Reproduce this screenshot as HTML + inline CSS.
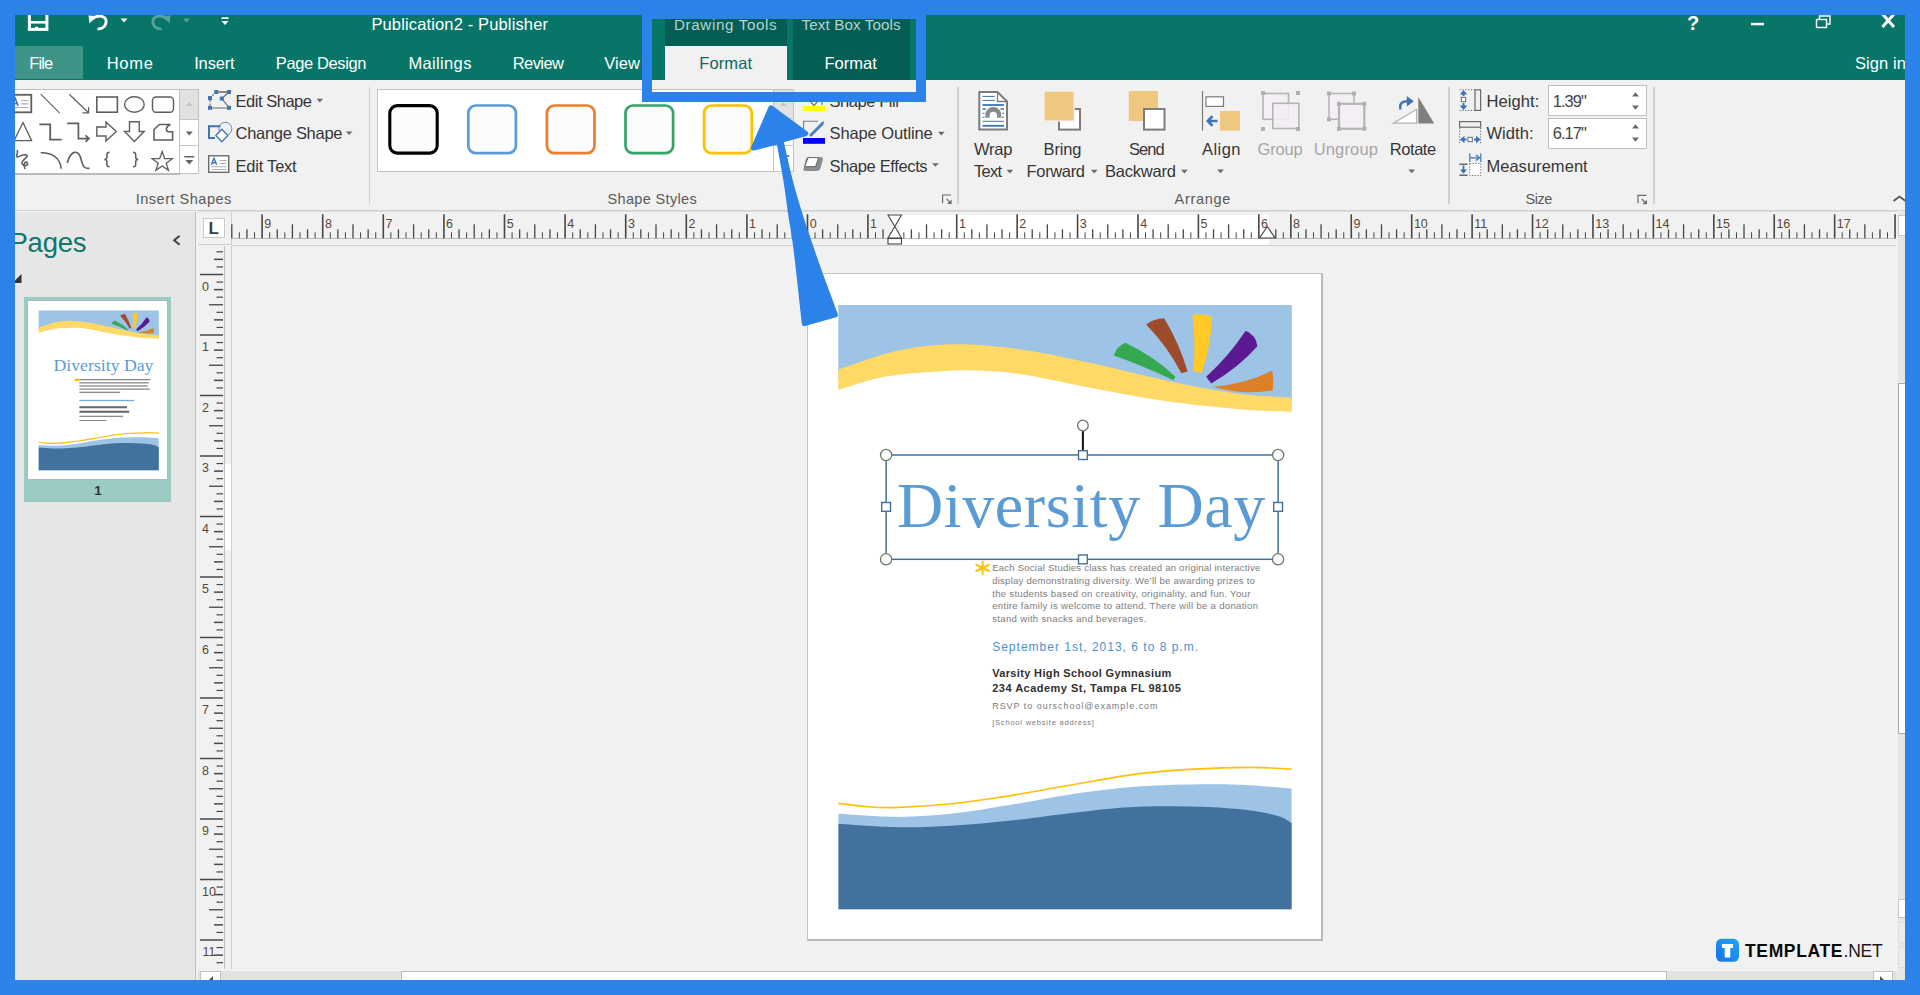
<!DOCTYPE html>
<html lang="en"><head><meta charset="utf-8"><title>Publisher - Format tab</title>
<style>
html,body{margin:0;padding:0;}
body{width:1920px;height:995px;overflow:hidden;background:#2b82e9;position:relative;font-family:'Liberation Sans',sans-serif;}
#win{position:absolute;left:0;top:0;width:1920px;height:995px;clip-path:inset(15px 15px 15px 15px);background:#f1f1f1;overflow:hidden;}
.a{position:absolute;}
.t{position:absolute;white-space:pre;}
svg{position:absolute;left:0;top:0;overflow:visible;}
</style></head><body>
<div id="win">
<!-- title + tab strip -->
<div class="a" style="left:0;top:0;width:1920px;height:80px;background:#077568"></div>
<div class="a" style="left:15px;top:46px;width:68px;height:33px;background:#3f9488"></div>
<div class="a" style="left:665px;top:0;width:122px;height:46px;background:#055e53"></div>
<div class="a" style="left:665px;top:46px;width:122px;height:34px;background:#f1f1f1"></div>
<div class="a" style="left:793px;top:0;width:117px;height:80px;background:#055e53"></div>
<!-- ribbon -->
<div class="a" style="left:0;top:80px;width:1920px;height:130px;background:#f1f1f1;border-bottom:1.5px solid #d2d2d2"></div>
<!-- shapes gallery -->
<div class="a" style="left:0;top:88.6px;width:179.5px;height:86.9px;background:#fff;border:1.5px solid #c2c2c2;border-bottom:2.5px solid #b7bcc2;box-sizing:border-box"></div>
<div class="a" style="left:179.5px;top:88.6px;width:19.5px;height:85.9px;background:#fff;border:1.5px solid #c2c2c2;border-left:none;box-sizing:border-box"></div>
<div class="a" style="left:180px;top:90.1px;width:17.5px;height:28.9px;background:#e1e1e1;border-bottom:1px solid #c6c6c6"></div>
<div class="a" style="left:180px;top:145px;width:17.5px;height:1px;background:#c6c6c6"></div>
<!-- styles gallery -->
<div class="a" style="left:377px;top:88.6px;width:397px;height:83.9px;background:#fff;border:1.5px solid #c2c2c2;box-sizing:border-box"></div>
<div class="a" style="left:774px;top:88.6px;width:20px;height:83.9px;background:#fff;border:1.5px solid #c2c2c2;border-left:none;box-sizing:border-box"></div>
<div class="a" style="left:774px;top:90.1px;width:18.5px;height:27.9px;background:#e1e1e1;border-bottom:1px solid #c6c6c6"></div>
<div class="a" style="left:774px;top:145px;width:18.5px;height:1px;background:#c6c6c6"></div>
<!-- group separators -->
<div class="a" style="left:368.5px;top:86.5px;width:1.5px;height:117px;background:#d0d0d0"></div>
<div class="a" style="left:957px;top:86.5px;width:1.5px;height:117px;background:#d0d0d0"></div>
<div class="a" style="left:1448px;top:86.5px;width:1.5px;height:117px;background:#d0d0d0"></div>
<div class="a" style="left:1653px;top:86.5px;width:1.5px;height:117px;background:#d0d0d0"></div>
<!-- size inputs -->
<div class="a" style="left:1548px;top:85px;width:98.5px;height:30.5px;background:#fff;border:1.5px solid #c0c0c0;box-sizing:border-box"></div>
<div class="a" style="left:1548px;top:118px;width:98.5px;height:30.5px;background:#fff;border:1.5px solid #c0c0c0;box-sizing:border-box"></div>
<svg width="1920" height="995" viewBox="0 0 1920 995">
<!-- quick access -->
<g fill="none" stroke="#fff" stroke-width="2.6">
 <rect x="29.4" y="8" width="17.5" height="21.4" stroke-width="3"/>
 <path d="M29 22.3H47"/>
 <path d="M36.6 26.8V30" stroke-width="3.2"/>
 <path d="M91.5 19.5 C98 13.5 107 16 106 22.5 C105.5 27 100.5 29.5 97.5 28.8" stroke-width="2.8"/>
</g>
<path d="M88.5 15.5 L96.5 16 L89.5 23.5Z" fill="#fff"/>
<g opacity=".33"><path d="M167.5 19.5 C161 13.5 152 16 153 22.5 C153.5 27 158.5 29.5 161.5 28.8" fill="none" stroke="#fff" stroke-width="2.8"/><path d="M170.5 15.5 L162.5 16 L169.5 23.5Z" fill="#fff"/><path d="M183 18.5h7l-3.5 4z" fill="#fff"/></g>
<path d="M120.5 18.5h7l-3.5 4z" fill="#fff"/>
<path d="M221.5 17.2h7v1.8h-7z M221.5 21h7l-3.5 4z" fill="#fff"/>
<!-- window controls -->
<path d="M1751 22.8h13v2.5h-13z" fill="#fff"/>
<g fill="none" stroke="#fff" stroke-width="1.4"><rect x="1816.5" y="19.5" width="10" height="8"/><path d="M1819.5 19.5V16h10.5v8h-3.5"/></g>
<path d="M1882.5 14 L1894 27 M1894 14 L1882.5 27" stroke="#fff" stroke-width="3" fill="none"/>
<!-- collapse ribbon chevron -->
<path d="M1893.5 201 L1899.5 196.5 L1905.5 201" stroke="#555" stroke-width="1.8" fill="none"/>
<text x="1693" y="30" text-anchor="middle" font-family="'Liberation Sans',sans-serif" font-weight="700" font-size="20" fill="#fff">?</text>
<!-- shapes gallery icons -->
<g fill="none" stroke="#5e5e5e" stroke-width="1.4">
 <rect x="10" y="94.8" width="21.3" height="17.5" stroke-width="1.8"/>
 <path d="M21 100.5h7.5M21 103.8h7.5M14 107.5h14.5" stroke="#b0b0b0" stroke-width="1.2"/>
 <path d="M40.7 94.2 L59.7 113.2" stroke-width="1.1"/>
 <path d="M69.2 94.2 L88.5 112.8 M82.5 112.9 H88.6 V107" stroke-width="1.2"/>
 <rect x="96.8" y="97" width="20.6" height="15.2" stroke-width="1.6"/>
 <ellipse cx="134.4" cy="104.5" rx="9.8" ry="7.7"/>
 <rect x="152.5" y="97" width="21" height="15.2" rx="3.5"/>
 <path d="M23 122.5 L31.6 140.7 H14 Z" stroke-width="1.3"/>
 <path d="M39.3 124.3 H50.2 V139.6 H61.7" stroke-width="1.8"/>
 <path d="M67.2 123.3 H78.4 V138.6 H88.5 M85.5 135.4 L89 138.6 L85.5 141.8" stroke-width="1.7"/>
 <path d="M96.8 127 H106 V122 L116.3 131.5 L106 141 V136 H96.8 Z"/>
 <path d="M129.5 121.8 H139.2 V131.5 H144.2 L134.4 141.5 L124.6 131.5 H129.5 Z"/>
 <path d="M154 140 V129.5 L159.5 124.5 H170.5 C165.5 126.5 165.5 130.5 168 131.8 H172.6 V140 Z" stroke-width="1.6"/>
 <path d="M17 150 C19 153 15 156 17.5 157 C21 156 25 153 27 155.5 C28 158 21 160 22 163.5 C23.5 167 28.5 166 27.5 163 C26.5 161 22.5 162 25 169" stroke-width="1.6"/>
 <path d="M40.7 152.8 C52 152.5 60.5 158 61.2 168.8" stroke-width="1.5"/>
 <path d="M67.2 163 C71 149.5 78.5 149.5 81 159 C83 167.5 85 168.6 89.5 168.4" stroke-width="1.6"/>
 <path d="M109.6 152.3 Q106.9 152.3 106.9 154.6 V157.3 Q106.9 159.5 104.3 159.5 Q106.9 159.5 106.9 161.7 V164.4 Q106.9 166.7 109.6 166.7" stroke-width="1.5"/>
 <path d="M133 152.3 Q135.7 152.3 135.7 154.6 V157.3 Q135.7 159.5 138.3 159.5 Q135.7 159.5 135.7 161.7 V164.4 Q135.7 166.7 133 166.7" stroke-width="1.5"/>
 <path d="M162.2 151.5 L164.7 158.6 L172.3 158.7 L166.2 163.2 L168.5 170.4 L162.2 166 L155.9 170.4 L158.2 163.2 L152.1 158.7 L159.7 158.6 Z" stroke-width="1.3"/>
</g>
<path d="M12.5 106 L15.3 98.5 L18.1 106 M13.5 103.6 H17.1" stroke="#3e74b5" stroke-width="1.5" fill="none"/>
<path d="M185.8 106 h7 l-3.5 -4z" fill="#c4c4c4"/>
<path d="M185.8 131.5 h7 l-3.5 4z" fill="#666"/>
<path d="M184.3 156 h10 v1.6 h-10z M185.3 160 h8 l-4 4.5z" fill="#666"/>
<path d="M780 106 h7 l-3.5 -4z" fill="#c4c4c4"/>
<path d="M780 131.5 h7 l-3.5 4z" fill="#666"/>
<path d="M779.5 155.2 h10 v1.6 h-10z M780.5 159.2 h8 l-4 4.5z" fill="#666"/>
<!-- shape styles -->
<g fill="#fdfcfd" stroke-width="3">
 <rect x="389.8" y="105.6" width="47.4" height="47.5" rx="7.5" stroke="#000" stroke-width="3.1"/>
 <rect x="468.3" y="105.5" width="47.6" height="47.7" rx="7.5" stroke="#5b9bd5" stroke-width="2.7"/>
 <rect x="546.9" y="105.5" width="47.6" height="47.7" rx="7.5" stroke="#ed7d31" stroke-width="2.7"/>
 <rect x="625.5" y="105.5" width="47.6" height="47.7" rx="7.5" stroke="#34a468" stroke-width="2.7"/>
 <rect x="704.1" y="105.5" width="47.6" height="47.7" rx="7.5" stroke="#ffc000" stroke-width="2.7"/>
</g>
<!-- Edit Shape icon -->
<g stroke="#6a6a6a" fill="none" stroke-width="1.2">
 <path d="M216.3 92 L210 98 M210 100 V106" stroke-dasharray="2 1.5"/>
 <path d="M218.3 92 H227" stroke-width="2" stroke="#8a8a8a"/>
 <path d="M229 92 L221.8 98.5 L229 107.5"/>
 <path d="M212 108 H227" stroke-width="1"/>
</g>
<g fill="#3e74b5"><rect x="214.3" y="90" width="4" height="4"/><rect x="227" y="90" width="4" height="4"/><rect x="208" y="96" width="4" height="4"/><rect x="219.8" y="96.6" width="4" height="4"/><rect x="208" y="105.8" width="4" height="4"/><rect x="227" y="105.8" width="4" height="4"/></g>
<!-- Change Shape icon -->
<circle cx="225.3" cy="128.8" r="6.5" fill="none" stroke="#5b8fd0" stroke-width="1"/>
<path d="M220.5 126.3 H209 V138 H215" fill="none" stroke="#3e74b5" stroke-width="2"/>
<path d="M221.8 129.3 L227.8 135.5 L221.8 141.7 L215.8 135.5 Z" fill="#fff" stroke="#3e74b5" stroke-width="1.3"/>
<!-- Edit Text icon -->
<rect x="208.7" y="155.8" width="20" height="16.5" fill="#fff" stroke="#6a6a6a" stroke-width="1.4"/>
<path d="M219.5 160.5h7M219.5 163.5h7M211.5 166.8h15M211.5 169.5h15" stroke="#b0b0b0" stroke-width="1.1" fill="none"/>
<path d="M211.3 164.8 L214 158.3 L216.7 164.8 M212.3 162.7 H215.7" stroke="#3e74b5" stroke-width="1.4" fill="none"/>
<!-- dropdown arrows -->
<g fill="#6a6a6a">
<path d="M316.5 98.8h6.6l-3.3 3.6z"/><path d="M345.9 131.5h6.6l-3.3 3.6z"/>
<path d="M938 131.8h6.6l-3.3 3.6z"/><path d="M932.1 163.2h6.6l-3.3 3.6z"/>
<path d="M1006.6 169.8h6.6l-3.3 3.6z"/><path d="M1090.9 169.8h6.6l-3.3 3.6z"/><path d="M1181.1 169.8h6.6l-3.3 3.6z"/>
<path d="M1217.2 169.6h6.6l-3.3 3.6z"/><path d="M1408.4 169.6h6.6l-3.3 3.6z"/>
<path d="M1632 96.5h7l-3.5-4.2z"/><path d="M1632 105.6h7l-3.5 4.2z"/>
<path d="M1632 128.5h7l-3.5-4.2z"/><path d="M1632 137.6h7l-3.5 4.2z"/>
</g>
<!-- Shape Fill / Outline / Effects -->
<path d="M808.5 99 L814 105.6 L819.5 99" fill="#fff" stroke="#6a6a6a" stroke-width="1.2"/><path d="M822 101.5 q1.6 2.6 0 3.6 q-1.6 -1 0 -3.6z" fill="#4a7fc0"/>
<rect x="803" y="106" width="22" height="5" fill="#ffff00"/>
<path d="M818 121.3 H803.6 V137" fill="none" stroke="#7a7a7a" stroke-width="1.1"/>
<path d="M811 135 L822 124" stroke="#4a7fc0" stroke-width="3" stroke-linecap="round" fill="none"/>
<path d="M809.8 136.6 l1 -3 l2 2z M821 122.5 l3 -1.5 l-0.6 3.2z" fill="#4a7fc0"/>
<rect x="803" y="138" width="22" height="5.8" fill="#0000ff"/>
<path d="M808 157 H820.5 Q823.5 157 822.8 160 L820.5 168 Q819.7 171 816.5 171 H805.5 Q802.8 171 803.6 168.5 L805.8 159.5 Q806.3 157 808 157Z" fill="#8c8c8c"/>
<path d="M808.2 157.6 H818.5 L815.6 166.6 H804.6 Z" fill="#fff" stroke="#6a6a6a" stroke-width="1"/>
<!-- dialog launchers -->
<g fill="none" stroke="#6a6a6a" stroke-width="1.2"><path d="M951 195 H942.6 V203"/><path d="M946.5 198.8 L950.5 202.8"/><path d="M1646.3 195.3 H1638 V203.3"/><path d="M1641.8 199 L1645.8 203"/></g>
<path d="M951.6 199.5 V204 H947z M1647 199.8 V204.3 H1642.4z" fill="#6a6a6a"/>
<!-- Wrap Text -->
<path d="M979.3 92 H997.5 L1007 101.5 V129.6 H979.3 Z" fill="#fff" stroke="#7c7c7c" stroke-width="2"/>
<path d="M997.5 92 V101.5 H1007" fill="none" stroke="#7c7c7c" stroke-width="1.3"/>
<g stroke="#3a74b8" fill="none"><path d="M982.5 96.4 H994.8 M982.5 100.4 H994.8" stroke-width="1"/><path d="M982.5 105 H1004" stroke-width="1.8"/><path d="M982.5 109 H986 M1000.5 109 H1004" stroke-width="1.6"/><path d="M982.5 113.3 H984.5 M1002 113.3 H1004 M982.5 117.3 H984.5 M1002 117.3 H1004" stroke-width="1"/><path d="M982.5 121.3 H1004" stroke-width="1"/><path d="M982.5 125.8 H1004" stroke-width="1.8"/></g>
<path d="M985.3 117.8 V115 A8 8 0 0 1 1001.3 115 V117.8 H997 V115.5 A3.7 3.7 0 0 0 989.6 115.5 V117.8 Z" fill="#8a8a8a"/>
<!-- Bring Forward -->
<rect x="1059" y="109" width="21" height="20.6" fill="#fff" stroke="#7c7c7c" stroke-width="2"/>
<rect x="1044" y="91" width="30.2" height="30" fill="#edc87e" stroke="#f3f3f6" stroke-width="1.2"/>
<!-- Send Backward -->
<rect x="1128.8" y="91" width="29.2" height="30" fill="#edc87e"/>
<rect x="1144" y="109" width="20.5" height="20.6" fill="#fff" stroke="#7c7c7c" stroke-width="2"/>
<!-- Align -->
<path d="M1202.5 91 V130.6" stroke="#7c7c7c" stroke-width="1.2"/>
<rect x="1206" y="96.8" width="17.5" height="9.6" fill="#fff" stroke="#7c7c7c" stroke-width="1.2"/>
<rect x="1220" y="111" width="20" height="19.6" fill="#edc87e"/>
<path d="M1217.5 121 H1208.5 M1212.5 116.2 L1207.8 121 L1212.5 125.8" fill="none" stroke="#3a74b8" stroke-width="2.6"/>
<!-- Group -->
<g fill="#f4eff4" stroke="#b4b4b4" stroke-width="1.6"><rect x="1263" y="93.5" width="25.5" height="25.8"/><rect x="1272.8" y="103.3" width="26" height="25.2" fill="#f4eff4" fill-opacity=".85"/></g>
<g fill="#b0b0b0"><rect x="1261" y="91" width="4" height="4"/><rect x="1296" y="91" width="4" height="4"/><rect x="1261" y="127" width="4" height="4"/><rect x="1296" y="127" width="4" height="4"/></g>
<!-- Ungroup -->
<g fill="#f4eff4" stroke="#b4b4b4"><rect x="1329" y="93.5" width="25" height="25.8" stroke-width="1.5"/><rect x="1339" y="103.8" width="25.3" height="25" stroke-width="2.2"/></g>
<g fill="#b0b0b0"><rect x="1327" y="91.5" width="4" height="4"/><rect x="1352" y="91.5" width="4" height="4"/><rect x="1327" y="117.3" width="4" height="4"/><rect x="1337" y="101.8" width="4" height="4"/><rect x="1362.3" y="101.8" width="4" height="4"/><rect x="1337" y="126.8" width="4" height="4"/><rect x="1362.3" y="126.8" width="4" height="4"/></g>
<!-- Rotate -->
<path d="M1393.5 123.2 H1416.6 V109.3 Z" fill="#fff" stroke="#b4b4b4" stroke-width="1.3"/>
<path d="M1418.3 97 V123.6 H1434.2 Z" fill="#7f7f7f"/>
<path d="M1400.5 109.5 C1399 103.5 1402.5 100.8 1408.5 101.3" fill="none" stroke="#3a74b8" stroke-width="2.4"/>
<path d="M1406.8 96 L1413.8 101.3 L1406.8 106.6 Z" fill="#3a74b8"/>
<!-- Height icon -->
<g fill="none" stroke="#6a6a6a" stroke-width="1"><path d="M1459.5 89.7 H1475 M1459.5 110.5 H1475" stroke-dasharray="1.2 1.6"/><rect x="1475" y="89.8" width="5.6" height="20.6" stroke-width="1.2"/><rect x="1461.3" y="97.3" width="4.4" height="4.4" fill="#fff"/></g>
<path d="M1463.5 96 V92 M1463.5 103 V107" stroke="#3a74b8" stroke-width="1.8" fill="none"/>
<path d="M1459.7 94.5 L1463.5 90 L1467.3 94.5 Z M1459.7 105.5 L1463.5 110 L1467.3 105.5 Z" fill="#3a74b8"/>
<!-- Width icon -->
<g fill="none" stroke="#6a6a6a" stroke-width="1"><rect x="1459.6" y="121.6" width="21" height="5.6" stroke-width="1.2"/><path d="M1459.6 128 V143.5 M1480.6 128 V143.5" stroke-dasharray="1.2 1.6"/><rect x="1467.9" y="137.3" width="4.4" height="4.4" fill="#fff"/></g>
<path d="M1466.5 139.5 H1462.5 M1474 139.5 H1478" stroke="#3a74b8" stroke-width="1.8" fill="none"/>
<path d="M1464.5 135.7 L1460 139.5 L1464.5 143.3 Z M1476 135.7 L1480.5 139.5 L1476 143.3 Z" fill="#3a74b8"/>
<!-- Measurement icon -->
<rect x="1469.8" y="163.5" width="11" height="12" fill="#fff" stroke="#6a6a6a" stroke-width="1" stroke-dasharray="1.2 1.6"/>
<path d="M1469.8 153.5 V162 M1480.8 153.5 V162 M1470.5 157.8 H1478" stroke="#3a74b8" stroke-width="1.2" fill="none"/>
<path d="M1476 155 L1479.5 157.8 L1476 160.6" stroke="#3a74b8" stroke-width="1.3" fill="none"/>
<path d="M1459.3 164.3 H1467.5 M1459.3 175.3 H1467.5" stroke="#6a6a6a" stroke-width="1.4"/>
<path d="M1463.5 165.5 V171" stroke="#3a74b8" stroke-width="1.8"/>
<path d="M1460 169.5 L1463.5 173.8 L1467 169.5 Z" fill="#3a74b8"/>

</svg>

<!-- pages panel -->
<div class="a" style="left:0;top:211.5px;width:195.2px;height:790px;background:#e6e6e6;border-right:1.7px solid #bebebe"></div>
<div class="a" style="left:23.8px;top:297px;width:147.2px;height:204.5px;background:#9bccc4"></div>
<div class="a" style="left:27.4px;top:300.4px;width:140.4px;height:179.4px;background:#fff;border:1px solid #b4b4c0;box-sizing:border-box"></div>
<!-- workspace -->
<!-- rulers -->
<div class="a" style="left:197.5px;top:211px;width:1699px;height:1px;background:#dcdcdc"></div>
<div class="a" style="left:232px;top:245px;width:1664px;height:1.3px;background:#cfcfcf"></div>
<div class="a" style="left:232px;top:238px;width:1664px;height:1.2px;background:#bdbdbd"></div>
<div class="a" style="left:900px;top:214.5px;width:368.6px;height:23.5px;background:#fff"></div>
<div class="a" style="left:900px;top:239px;width:368.6px;height:6px;background:#fff"></div>
<!-- corner box -->
<div class="a" style="left:197.5px;top:212px;width:34px;height:33px;border-right:1.2px solid #cfcfcf;border-bottom:1.3px solid #cfcfcf;box-sizing:border-box"></div>
<div class="a" style="left:202.5px;top:217.5px;width:22.5px;height:20.5px;background:#fff;border:1.5px solid #c9c9c9;box-sizing:border-box"></div>
<!-- vertical ruler -->
<div class="a" style="left:223.6px;top:246px;width:1.8px;height:723px;background:#c2c2c2"></div>
<div class="a" style="left:231px;top:246px;width:1.2px;height:723px;background:#cfcfcf"></div>
<div class="a" style="left:225.4px;top:464px;width:5.6px;height:86px;background:#fff"></div>
<!-- right scrollbar strip -->
<div class="a" style="left:1898px;top:211.5px;width:8px;height:770px;background:#e6e6e6"></div>
<div class="a" style="left:1897.5px;top:214.5px;width:9px;height:21px;background:#fff;border:1px solid #c4c4c4;box-sizing:border-box"></div>
<div class="a" style="left:1898px;top:383px;width:9px;height:350.5px;background:#fff;border:1.2px solid #a9a9a9;box-sizing:border-box"></div>
<div class="a" style="left:1897.5px;top:898.5px;width:9px;height:19.5px;background:#fff;border:1px solid #c4c4c4;box-sizing:border-box"></div>
<div class="a" style="left:1898px;top:922px;width:9px;height:21px;background:#ececec;border:1px solid #dcdcdc;box-sizing:border-box"></div>
<div class="a" style="left:1898px;top:947px;width:9px;height:21px;background:#ececec;border:1px solid #dcdcdc;box-sizing:border-box"></div>
<!-- bottom scrollbar -->
<div class="a" style="left:197.5px;top:970.5px;width:1699.5px;height:12px;background:#e2e2e2"></div>
<div class="a" style="left:200px;top:971px;width:20.5px;height:12px;background:#fff;border:1.3px solid #c2c2c2;box-sizing:border-box"></div>
<div class="a" style="left:401px;top:971px;width:1265.5px;height:12px;background:#fff;border:1.3px solid #bcbcbc;box-sizing:border-box"></div>
<div class="a" style="left:1872.5px;top:971px;width:20px;height:12px;background:#fff;border:1.3px solid #c2c2c2;box-sizing:border-box"></div>
<!-- page -->
<div class="a" style="left:807px;top:272.8px;width:516px;height:668.5px;background:#fff;border:1.3px solid #c3c3c3;border-right:2px solid #b9b9b9;border-bottom:2px solid #b9b9b9;box-sizing:border-box"></div>
<svg width="1920" height="995" viewBox="0 0 1920 995">
<g fill="#474747"><rect x='231.15' y='224.3' width='1.3' height='14'/><rect x='238.88' y='232.3' width='1' height='6'/><rect x='246.30' y='229.3' width='1.3' height='9'/><rect x='254.02' y='232.3' width='1' height='6'/><rect x='261.30' y='214.3' width='1.6' height='24'/><rect x='269.17' y='232.3' width='1' height='6'/><rect x='276.60' y='229.3' width='1.3' height='9'/><rect x='284.32' y='232.3' width='1' height='6'/><rect x='291.75' y='224.3' width='1.3' height='14'/><rect x='299.47' y='232.3' width='1' height='6'/><rect x='306.90' y='229.3' width='1.3' height='9'/><rect x='314.62' y='232.3' width='1' height='6'/><rect x='321.90' y='214.3' width='1.6' height='24'/><rect x='329.77' y='232.3' width='1' height='6'/><rect x='337.20' y='229.3' width='1.3' height='9'/><rect x='344.93' y='232.3' width='1' height='6'/><rect x='352.35' y='224.3' width='1.3' height='14'/><rect x='360.07' y='232.3' width='1' height='6'/><rect x='367.50' y='229.3' width='1.3' height='9'/><rect x='375.22' y='232.3' width='1' height='6'/><rect x='382.50' y='214.3' width='1.6' height='24'/><rect x='390.38' y='232.3' width='1' height='6'/><rect x='397.80' y='229.3' width='1.3' height='9'/><rect x='405.52' y='232.3' width='1' height='6'/><rect x='412.95' y='224.3' width='1.3' height='14'/><rect x='420.68' y='232.3' width='1' height='6'/><rect x='428.10' y='229.3' width='1.3' height='9'/><rect x='435.82' y='232.3' width='1' height='6'/><rect x='443.10' y='214.3' width='1.6' height='24'/><rect x='450.97' y='232.3' width='1' height='6'/><rect x='458.40' y='229.3' width='1.3' height='9'/><rect x='466.12' y='232.3' width='1' height='6'/><rect x='473.55' y='224.3' width='1.3' height='14'/><rect x='481.27' y='232.3' width='1' height='6'/><rect x='488.70' y='229.3' width='1.3' height='9'/><rect x='496.43' y='232.3' width='1' height='6'/><rect x='503.70' y='214.3' width='1.6' height='24'/><rect x='511.58' y='232.3' width='1' height='6'/><rect x='519.00' y='229.3' width='1.3' height='9'/><rect x='526.72' y='232.3' width='1' height='6'/><rect x='534.15' y='224.3' width='1.3' height='14'/><rect x='541.88' y='232.3' width='1' height='6'/><rect x='549.30' y='229.3' width='1.3' height='9'/><rect x='557.02' y='232.3' width='1' height='6'/><rect x='564.30' y='214.3' width='1.6' height='24'/><rect x='572.17' y='232.3' width='1' height='6'/><rect x='579.60' y='229.3' width='1.3' height='9'/><rect x='587.33' y='232.3' width='1' height='6'/><rect x='594.75' y='224.3' width='1.3' height='14'/><rect x='602.48' y='232.3' width='1' height='6'/><rect x='609.90' y='229.3' width='1.3' height='9'/><rect x='617.62' y='232.3' width='1' height='6'/><rect x='624.90' y='214.3' width='1.6' height='24'/><rect x='632.77' y='232.3' width='1' height='6'/><rect x='640.20' y='229.3' width='1.3' height='9'/><rect x='647.92' y='232.3' width='1' height='6'/><rect x='655.35' y='224.3' width='1.3' height='14'/><rect x='663.08' y='232.3' width='1' height='6'/><rect x='670.50' y='229.3' width='1.3' height='9'/><rect x='678.23' y='232.3' width='1' height='6'/><rect x='685.50' y='214.3' width='1.6' height='24'/><rect x='693.38' y='232.3' width='1' height='6'/><rect x='700.80' y='229.3' width='1.3' height='9'/><rect x='708.52' y='232.3' width='1' height='6'/><rect x='715.95' y='224.3' width='1.3' height='14'/><rect x='723.67' y='232.3' width='1' height='6'/><rect x='731.10' y='229.3' width='1.3' height='9'/><rect x='738.83' y='232.3' width='1' height='6'/><rect x='746.10' y='214.3' width='1.6' height='24'/><rect x='753.98' y='232.3' width='1' height='6'/><rect x='761.40' y='229.3' width='1.3' height='9'/><rect x='769.12' y='232.3' width='1' height='6'/><rect x='776.55' y='224.3' width='1.3' height='14'/><rect x='784.27' y='232.3' width='1' height='6'/><rect x='791.70' y='229.3' width='1.3' height='9'/><rect x='799.42' y='232.3' width='1' height='6'/><rect x='806.70' y='214.3' width='1.6' height='24'/><rect x='814.55' y='232.3' width='1' height='6'/><rect x='821.96' y='229.3' width='1.3' height='9'/><rect x='829.66' y='232.3' width='1' height='6'/><rect x='837.06' y='224.3' width='1.3' height='14'/><rect x='844.76' y='232.3' width='1' height='6'/><rect x='852.17' y='229.3' width='1.3' height='9'/><rect x='859.87' y='232.3' width='1' height='6'/><rect x='867.12' y='214.3' width='1.6' height='24'/><rect x='874.97' y='232.3' width='1' height='6'/><rect x='882.38' y='229.3' width='1.3' height='9'/><rect x='890.08' y='232.3' width='1' height='6'/><rect x='1275.11' y='229.3' width='1.3' height='9'/><rect x='1282.81' y='232.3' width='1' height='6'/><rect x='1290.06' y='214.3' width='1.6' height='24'/><rect x='1297.91' y='232.3' width='1' height='6'/><rect x='1305.32' y='229.3' width='1.3' height='9'/><rect x='1313.02' y='232.3' width='1' height='6'/><rect x='1320.42' y='224.3' width='1.3' height='14'/><rect x='1328.12' y='232.3' width='1' height='6'/><rect x='1335.53' y='229.3' width='1.3' height='9'/><rect x='1343.23' y='232.3' width='1' height='6'/><rect x='1350.48' y='214.3' width='1.6' height='24'/><rect x='1358.33' y='232.3' width='1' height='6'/><rect x='1365.73' y='229.3' width='1.3' height='9'/><rect x='1373.44' y='232.3' width='1' height='6'/><rect x='1380.84' y='224.3' width='1.3' height='14'/><rect x='1388.54' y='232.3' width='1' height='6'/><rect x='1395.94' y='229.3' width='1.3' height='9'/><rect x='1403.65' y='232.3' width='1' height='6'/><rect x='1410.90' y='214.3' width='1.6' height='24'/><rect x='1418.75' y='232.3' width='1' height='6'/><rect x='1426.15' y='229.3' width='1.3' height='9'/><rect x='1433.86' y='232.3' width='1' height='6'/><rect x='1441.26' y='224.3' width='1.3' height='14'/><rect x='1448.96' y='232.3' width='1' height='6'/><rect x='1456.36' y='229.3' width='1.3' height='9'/><rect x='1464.07' y='232.3' width='1' height='6'/><rect x='1471.32' y='214.3' width='1.6' height='24'/><rect x='1479.17' y='232.3' width='1' height='6'/><rect x='1486.57' y='229.3' width='1.3' height='9'/><rect x='1494.28' y='232.3' width='1' height='6'/><rect x='1501.68' y='224.3' width='1.3' height='14'/><rect x='1509.38' y='232.3' width='1' height='6'/><rect x='1516.78' y='229.3' width='1.3' height='9'/><rect x='1524.49' y='232.3' width='1' height='6'/><rect x='1531.74' y='214.3' width='1.6' height='24'/><rect x='1539.59' y='232.3' width='1' height='6'/><rect x='1546.99' y='229.3' width='1.3' height='9'/><rect x='1554.70' y='232.3' width='1' height='6'/><rect x='1562.10' y='224.3' width='1.3' height='14'/><rect x='1569.80' y='232.3' width='1' height='6'/><rect x='1577.20' y='229.3' width='1.3' height='9'/><rect x='1584.91' y='232.3' width='1' height='6'/><rect x='1592.16' y='214.3' width='1.6' height='24'/><rect x='1600.01' y='232.3' width='1' height='6'/><rect x='1607.41' y='229.3' width='1.3' height='9'/><rect x='1615.12' y='232.3' width='1' height='6'/><rect x='1622.52' y='224.3' width='1.3' height='14'/><rect x='1630.22' y='232.3' width='1' height='6'/><rect x='1637.62' y='229.3' width='1.3' height='9'/><rect x='1645.33' y='232.3' width='1' height='6'/><rect x='1652.58' y='214.3' width='1.6' height='24'/><rect x='1660.43' y='232.3' width='1' height='6'/><rect x='1667.84' y='229.3' width='1.3' height='9'/><rect x='1675.54' y='232.3' width='1' height='6'/><rect x='1682.94' y='224.3' width='1.3' height='14'/><rect x='1690.64' y='232.3' width='1' height='6'/><rect x='1698.05' y='229.3' width='1.3' height='9'/><rect x='1705.75' y='232.3' width='1' height='6'/><rect x='1713.00' y='214.3' width='1.6' height='24'/><rect x='1720.85' y='232.3' width='1' height='6'/><rect x='1728.25' y='229.3' width='1.3' height='9'/><rect x='1735.96' y='232.3' width='1' height='6'/><rect x='1743.36' y='224.3' width='1.3' height='14'/><rect x='1751.06' y='232.3' width='1' height='6'/><rect x='1758.46' y='229.3' width='1.3' height='9'/><rect x='1766.17' y='232.3' width='1' height='6'/><rect x='1773.42' y='214.3' width='1.6' height='24'/><rect x='1781.27' y='232.3' width='1' height='6'/><rect x='1788.67' y='229.3' width='1.3' height='9'/><rect x='1796.38' y='232.3' width='1' height='6'/><rect x='1803.78' y='224.3' width='1.3' height='14'/><rect x='1811.48' y='232.3' width='1' height='6'/><rect x='1818.88' y='229.3' width='1.3' height='9'/><rect x='1826.59' y='232.3' width='1' height='6'/><rect x='1833.84' y='214.3' width='1.6' height='24'/><rect x='1841.69' y='232.3' width='1' height='6'/><rect x='1849.10' y='229.3' width='1.3' height='9'/><rect x='1856.80' y='232.3' width='1' height='6'/><rect x='1864.20' y='224.3' width='1.3' height='14'/><rect x='1871.90' y='232.3' width='1' height='6'/><rect x='1879.30' y='229.3' width='1.3' height='9'/><rect x='1887.01' y='232.3' width='1' height='6'/><rect x='1894.26' y='214.3' width='1.6' height='24'/><rect x='903.35' y='232.3' width='1' height='6'/><rect x='910.75' y='229.3' width='1.3' height='9'/><rect x='918.46' y='232.3' width='1' height='6'/><rect x='925.86' y='224.3' width='1.3' height='14'/><rect x='933.56' y='232.3' width='1' height='6'/><rect x='940.97' y='229.3' width='1.3' height='9'/><rect x='948.67' y='232.3' width='1' height='6'/><rect x='955.92' y='214.3' width='1.6' height='24'/><rect x='963.77' y='232.3' width='1' height='6'/><rect x='971.17' y='229.3' width='1.3' height='9'/><rect x='978.88' y='232.3' width='1' height='6'/><rect x='986.28' y='224.3' width='1.3' height='14'/><rect x='993.98' y='232.3' width='1' height='6'/><rect x='1001.38' y='229.3' width='1.3' height='9'/><rect x='1009.09' y='232.3' width='1' height='6'/><rect x='1016.34' y='214.3' width='1.6' height='24'/><rect x='1024.19' y='232.3' width='1' height='6'/><rect x='1031.59' y='229.3' width='1.3' height='9'/><rect x='1039.30' y='232.3' width='1' height='6'/><rect x='1046.70' y='224.3' width='1.3' height='14'/><rect x='1054.40' y='232.3' width='1' height='6'/><rect x='1061.80' y='229.3' width='1.3' height='9'/><rect x='1069.51' y='232.3' width='1' height='6'/><rect x='1076.76' y='214.3' width='1.6' height='24'/><rect x='1084.61' y='232.3' width='1' height='6'/><rect x='1092.01' y='229.3' width='1.3' height='9'/><rect x='1099.72' y='232.3' width='1' height='6'/><rect x='1107.12' y='224.3' width='1.3' height='14'/><rect x='1114.82' y='232.3' width='1' height='6'/><rect x='1122.22' y='229.3' width='1.3' height='9'/><rect x='1129.93' y='232.3' width='1' height='6'/><rect x='1137.18' y='214.3' width='1.6' height='24'/><rect x='1145.03' y='232.3' width='1' height='6'/><rect x='1152.43' y='229.3' width='1.3' height='9'/><rect x='1160.14' y='232.3' width='1' height='6'/><rect x='1167.54' y='224.3' width='1.3' height='14'/><rect x='1175.24' y='232.3' width='1' height='6'/><rect x='1182.64' y='229.3' width='1.3' height='9'/><rect x='1190.35' y='232.3' width='1' height='6'/><rect x='1197.60' y='214.3' width='1.6' height='24'/><rect x='1205.45' y='232.3' width='1' height='6'/><rect x='1212.85' y='229.3' width='1.3' height='9'/><rect x='1220.56' y='232.3' width='1' height='6'/><rect x='1227.96' y='224.3' width='1.3' height='14'/><rect x='1235.66' y='232.3' width='1' height='6'/><rect x='1243.06' y='229.3' width='1.3' height='9'/><rect x='1250.77' y='232.3' width='1' height='6'/><rect x='1258.02' y='214.3' width='1.6' height='24'/></g>
<g fill="#474747"><rect x='216.5' y='251.21' width='6.5' height='1.2'/><rect x='214.0' y='258.62' width='9' height='1.5'/><rect x='216.5' y='266.34' width='6.5' height='1.2'/><rect x='200.0' y='273.75' width='23' height='1.5'/><rect x='216.5' y='281.46' width='6.5' height='1.2'/><rect x='214.0' y='288.88' width='9' height='1.5'/><rect x='216.5' y='296.59' width='6.5' height='1.2'/><rect x='209.0' y='304.10' width='14' height='1.3'/><rect x='216.5' y='311.71' width='6.5' height='1.2'/><rect x='214.0' y='319.12' width='9' height='1.5'/><rect x='216.5' y='326.84' width='6.5' height='1.2'/><rect x='200.0' y='334.25' width='23' height='1.5'/><rect x='216.5' y='341.96' width='6.5' height='1.2'/><rect x='214.0' y='349.38' width='9' height='1.5'/><rect x='216.5' y='357.09' width='6.5' height='1.2'/><rect x='209.0' y='364.60' width='14' height='1.3'/><rect x='216.5' y='372.21' width='6.5' height='1.2'/><rect x='214.0' y='379.62' width='9' height='1.5'/><rect x='216.5' y='387.34' width='6.5' height='1.2'/><rect x='200.0' y='394.75' width='23' height='1.5'/><rect x='216.5' y='402.46' width='6.5' height='1.2'/><rect x='214.0' y='409.88' width='9' height='1.5'/><rect x='216.5' y='417.59' width='6.5' height='1.2'/><rect x='209.0' y='425.10' width='14' height='1.3'/><rect x='216.5' y='432.71' width='6.5' height='1.2'/><rect x='214.0' y='440.12' width='9' height='1.5'/><rect x='216.5' y='447.84' width='6.5' height='1.2'/><rect x='200.0' y='455.25' width='23' height='1.5'/><rect x='216.5' y='462.96' width='6.5' height='1.2'/><rect x='214.0' y='470.38' width='9' height='1.5'/><rect x='216.5' y='478.09' width='6.5' height='1.2'/><rect x='209.0' y='485.60' width='14' height='1.3'/><rect x='216.5' y='493.21' width='6.5' height='1.2'/><rect x='214.0' y='500.62' width='9' height='1.5'/><rect x='216.5' y='508.34' width='6.5' height='1.2'/><rect x='200.0' y='515.75' width='23' height='1.5'/><rect x='216.5' y='523.46' width='6.5' height='1.2'/><rect x='214.0' y='530.88' width='9' height='1.5'/><rect x='216.5' y='538.59' width='6.5' height='1.2'/><rect x='209.0' y='546.10' width='14' height='1.3'/><rect x='216.5' y='553.71' width='6.5' height='1.2'/><rect x='214.0' y='561.12' width='9' height='1.5'/><rect x='216.5' y='568.84' width='6.5' height='1.2'/><rect x='200.0' y='576.25' width='23' height='1.5'/><rect x='216.5' y='583.96' width='6.5' height='1.2'/><rect x='214.0' y='591.38' width='9' height='1.5'/><rect x='216.5' y='599.09' width='6.5' height='1.2'/><rect x='209.0' y='606.60' width='14' height='1.3'/><rect x='216.5' y='614.21' width='6.5' height='1.2'/><rect x='214.0' y='621.62' width='9' height='1.5'/><rect x='216.5' y='629.34' width='6.5' height='1.2'/><rect x='200.0' y='636.75' width='23' height='1.5'/><rect x='216.5' y='644.46' width='6.5' height='1.2'/><rect x='214.0' y='651.88' width='9' height='1.5'/><rect x='216.5' y='659.59' width='6.5' height='1.2'/><rect x='209.0' y='667.10' width='14' height='1.3'/><rect x='216.5' y='674.71' width='6.5' height='1.2'/><rect x='214.0' y='682.12' width='9' height='1.5'/><rect x='216.5' y='689.84' width='6.5' height='1.2'/><rect x='200.0' y='697.25' width='23' height='1.5'/><rect x='216.5' y='704.96' width='6.5' height='1.2'/><rect x='214.0' y='712.38' width='9' height='1.5'/><rect x='216.5' y='720.09' width='6.5' height='1.2'/><rect x='209.0' y='727.60' width='14' height='1.3'/><rect x='216.5' y='735.21' width='6.5' height='1.2'/><rect x='214.0' y='742.62' width='9' height='1.5'/><rect x='216.5' y='750.34' width='6.5' height='1.2'/><rect x='200.0' y='757.75' width='23' height='1.5'/><rect x='216.5' y='765.46' width='6.5' height='1.2'/><rect x='214.0' y='772.88' width='9' height='1.5'/><rect x='216.5' y='780.59' width='6.5' height='1.2'/><rect x='209.0' y='788.10' width='14' height='1.3'/><rect x='216.5' y='795.71' width='6.5' height='1.2'/><rect x='214.0' y='803.12' width='9' height='1.5'/><rect x='216.5' y='810.84' width='6.5' height='1.2'/><rect x='200.0' y='818.25' width='23' height='1.5'/><rect x='216.5' y='825.96' width='6.5' height='1.2'/><rect x='214.0' y='833.38' width='9' height='1.5'/><rect x='216.5' y='841.09' width='6.5' height='1.2'/><rect x='209.0' y='848.60' width='14' height='1.3'/><rect x='216.5' y='856.21' width='6.5' height='1.2'/><rect x='214.0' y='863.62' width='9' height='1.5'/><rect x='216.5' y='871.34' width='6.5' height='1.2'/><rect x='200.0' y='878.75' width='23' height='1.5'/><rect x='216.5' y='886.46' width='6.5' height='1.2'/><rect x='214.0' y='893.88' width='9' height='1.5'/><rect x='216.5' y='901.59' width='6.5' height='1.2'/><rect x='209.0' y='909.10' width='14' height='1.3'/><rect x='216.5' y='916.71' width='6.5' height='1.2'/><rect x='214.0' y='924.12' width='9' height='1.5'/><rect x='216.5' y='931.84' width='6.5' height='1.2'/><rect x='200.0' y='939.25' width='23' height='1.5'/><rect x='216.5' y='946.96' width='6.5' height='1.2'/><rect x='214.0' y='954.38' width='9' height='1.5'/><rect x='216.5' y='962.09' width='6.5' height='1.2'/></g>
<g font-family="'Liberation Sans',sans-serif" font-size="12.5" fill="#5a4636"><text x='264.3' y='227.6'>9</text><text x='324.9' y='227.6'>8</text><text x='385.5' y='227.6'>7</text><text x='446.1' y='227.6'>6</text><text x='506.7' y='227.6'>5</text><text x='567.3' y='227.6'>4</text><text x='627.9' y='227.6'>3</text><text x='688.5' y='227.6'>2</text><text x='749.1' y='227.6'>1</text><text x='809.7' y='227.6'>0</text><text x='870.1' y='227.6'>1</text><text x='1293.1' y='227.6'>8</text><text x='1353.5' y='227.6'>9</text><text x='1413.9' y='227.6'>10</text><text x='1474.3' y='227.6'>11</text><text x='1534.7' y='227.6'>12</text><text x='1595.2' y='227.6'>13</text><text x='1655.6' y='227.6'>14</text><text x='1716.0' y='227.6'>15</text><text x='1776.4' y='227.6'>16</text><text x='1836.8' y='227.6'>17</text><text x='958.9' y='227.6'>1</text><text x='1019.3' y='227.6'>2</text><text x='1079.8' y='227.6'>3</text><text x='1140.2' y='227.6'>4</text><text x='1200.6' y='227.6'>5</text><text x='1261.0' y='227.6'>6</text></g>
<g font-family="'Liberation Sans',sans-serif" font-size="12.5" fill="#5a4636"><text x='205.5' y='290.5' text-anchor='middle'>0</text><text x='205.5' y='351.0' text-anchor='middle'>1</text><text x='205.5' y='411.5' text-anchor='middle'>2</text><text x='205.5' y='472.0' text-anchor='middle'>3</text><text x='205.5' y='532.5' text-anchor='middle'>4</text><text x='205.5' y='593.0' text-anchor='middle'>5</text><text x='205.5' y='653.5' text-anchor='middle'>6</text><text x='205.5' y='714.0' text-anchor='middle'>7</text><text x='205.5' y='774.5' text-anchor='middle'>8</text><text x='205.5' y='835.0' text-anchor='middle'>9</text><text x='209.0' y='895.5' text-anchor='middle'>10</text><text x='209.0' y='956.0' text-anchor='middle'>11</text></g>
<text x="213.8" y="234.3" text-anchor="middle" font-family="'Liberation Sans',sans-serif" font-weight="700" font-size="17" fill="#3c3c3c">L</text>
<!-- indent markers -->
<path d="M888 215 H901.5 L894.8 226.5 Z M888 238 H901.5 L894.8 226.5 Z" fill="#fff" stroke="#474747" stroke-width="1.1"/>
<rect x="888" y="238.5" width="13.5" height="5.5" fill="#fff" stroke="#474747" stroke-width="1.1"/>
<path d="M1259.5 238 L1267.3 226.5 L1275 238 Z" fill="#fff" stroke="#474747" stroke-width="1.2"/>
<!-- pages pane glyphs -->
<path d="M179.6 235.8 L174.2 240.3 L179.6 244.8" fill="none" stroke="#444" stroke-width="2"/>
<path d="M21.5 274 V283 H12.5 Z" fill="#333"/>
<path d="M213 976 L207 982 L213 988Z M1880 976 L1886 982 L1880 988Z" fill="#555"/>
<!-- page graphics -->
<g id="pgc">
<path d="M838.3 305 H1291.8 V404.8 C1282.7 404.2 1257.8 403.5 1237 401.2 C1216.2 399 1190.4 395.2 1167 391.1 C1143.6 386.9 1120.1 381.4 1096.6 376.6 C1073.1 371.9 1048.3 365.7 1026 362.5 C1003.7 359.3 980.4 358 962.9 357.5 C945.4 356.9 933.6 357.8 920.7 359 C907.8 360.3 899.2 361.7 885.5 365.2 C871.8 368.7 846.2 377.4 838.3 379.8 Z" fill="#9dc3e6"/>
<path d="M838.3 369.6 C846.2 367 871.8 357.6 885.5 353.8 C899.2 350 907.8 348.3 920.7 346.7 C933.6 345.1 945.4 343.7 962.9 344.3 C980.4 344.9 1003.7 346.9 1026 350.2 C1048.3 353.5 1073.1 359.2 1096.6 364.3 C1120.1 369.4 1143.6 375.9 1167 380.8 C1190.4 385.7 1216.2 390.7 1237 393.5 C1257.8 396.3 1282.7 397 1291.8 397.7 L1291.8 411.8 C1282.7 411.3 1257.8 410.8 1237 409 C1216.2 407.2 1190.4 404.6 1167 401.3 C1143.6 398 1120.1 393.4 1096.6 389 C1073.1 384.6 1045.9 378 1026 374.9 C1006.1 371.8 991.7 371.2 977 370.6 C962.3 370 953.2 370.4 938 371.4 C922.8 372.4 902.1 373.5 885.5 376.6 C868.9 379.7 846.2 387.8 838.3 390 Z" fill="#ffd966"/>
<path d="M1113.8 355.5 Q1116.5 346.5 1125.5 342.8 Q1155 357 1175.4 376.8 L1173.5 380.3 Q1140 364.5 1113.8 355.5Z" fill="#37a852"/>
<path d="M1146.2 324.5 Q1154 318.5 1164.2 318.3 Q1180 345 1187.6 371.6 L1181.3 373.2 Q1168 347 1146.2 324.5Z" fill="#9e4b2c"/>
<path d="M1192.3 314.6 Q1202 313.6 1212.1 316.6 Q1211 346 1201.8 373 L1193.3 371.2 Q1196 342 1192.3 314.6Z" fill="#ffc928"/>
<path d="M1245.7 330.8 Q1256 335 1257.4 346.2 Q1238 368 1211.2 383.4 L1206.2 376.8 Q1229 356 1245.7 330.8Z" fill="#5c1a92"/>
<path d="M1272 370.8 Q1274.5 381 1272.5 390.5 Q1244 395.5 1213 386.8 Q1246 384 1272 370.8Z" fill="#dc7f27"/>
<path d="M838.5 813.8 C848.5 814.3 879 817 898.4 816.9 C917.8 816.8 936 815.3 954.7 813.3 C973.5 811.3 991.7 807.9 1010.9 804.8 C1030.1 801.6 1048.9 797.4 1070 794.4 C1091.1 791.4 1114.5 788.3 1137.5 786.6 C1160.5 784.9 1189 784.5 1207.8 784.3 C1226.5 784.1 1236 784.5 1250 785.2 C1264 785.9 1284.7 788 1291.6 788.5 V909.2 H838.5 Z" fill="#9dc3e6"/>
<path d="M838.5 823.7 C844.6 824.1 862.7 825.7 875 826.3 C887.3 826.9 896.9 827.6 912.5 827.3 C928.1 827 950 825.9 968.7 824.5 C987.5 823.1 1008.1 820.8 1025 818.9 C1041.9 817 1053.6 815.2 1070 813.3 C1086.4 811.4 1107.5 808.8 1123.4 807.6 C1139.3 806.4 1151.5 806.3 1165.6 806.2 C1179.7 806.1 1193.7 806.4 1207.8 807.1 C1221.9 807.8 1238.3 809 1250 810.5 C1261.7 812 1271.1 814 1278 816.1 C1284.9 818.2 1289.3 821.9 1291.6 823.1 V909.2 H838.5 Z" fill="#41719c"/>
<path d="M838.5 803.4 C842.9 803.9 856 805.8 865 806.5 C874 807.2 880.2 807.9 892.8 807.6 C905.4 807.3 923.2 806.4 940.6 804.8 C958 803.2 975.3 801.1 996.9 797.8 C1018.5 794.5 1046.6 789.2 1070 785.2 C1093.4 781.2 1116.9 776.6 1137.5 773.9 C1158.1 771.2 1175 770.2 1193.7 769.1 C1212.5 768 1233.7 767.4 1250 767.4 C1266.3 767.4 1284.7 768.8 1291.6 769.1" fill="none" stroke="#ffc000" stroke-width="1.6"/>
</g>
<!-- thumbnail -->
<g transform="matrix(0.265 0 0 0.2643 -183.5 229.9)">
<use href="#pgc"/><path d="M838.5 803.4 C842.9 803.9 856 805.8 865 806.5 C874 807.2 880.2 807.9 892.8 807.6 C905.4 807.3 923.2 806.4 940.6 804.8 C958 803.2 975.3 801.1 996.9 797.8 C1018.5 794.5 1046.6 789.2 1070 785.2 C1093.4 781.2 1116.9 776.6 1137.5 773.9 C1158.1 771.2 1175 770.2 1193.7 769.1 C1212.5 768 1233.7 767.4 1250 767.4 C1266.3 767.4 1284.7 768.8 1291.6 769.1" fill="none" stroke="#ffc000" stroke-width="4"/>
<g fill="#8a8a8a"><rect x="992" y="564" width="268" height="5"/><rect x="992" y="576" width="262" height="5"/><rect x="992" y="588" width="258" height="5"/><rect x="992" y="600" width="265" height="5"/><rect x="992" y="612" width="154" height="5"/>
<rect x="992" y="667" width="180" height="8" fill="#6a6a6a"/><rect x="992" y="684" width="188" height="8" fill="#6a6a6a"/><rect x="992" y="703" width="165" height="5"/><rect x="992" y="719" width="102" height="4"/></g>
<rect x="992" y="643" width="206" height="5" fill="#74aadc"/>
<rect x="974" y="563" width="18" height="9" fill="#ffc000"/>
</g>
<text x="103.5" y="370.6" text-anchor="middle" font-family="'Liberation Serif',serif" font-size="17.6" fill="#5b9bd5" textLength="100" lengthAdjust="spacingAndGlyphs">Diversity Day</text>
<!-- bullet star -->
<g stroke="#ffc000" stroke-width="2" stroke-linecap="round"><path d="M982.6 561.8 V574 M976.3 564.8 L989 571 M976.3 571 L989 564.8"/></g>
<!-- selection -->
<rect x="886.1" y="455" width="392" height="104.3" fill="none" stroke="#41719c" stroke-width="1.5"/>
<path d="M1082.9 431 V451" stroke="#111" stroke-width="2"/>
<g fill="#fff" stroke="#6a7a6a" stroke-width="1.3">
<circle cx="1082.9" cy="425.5" r="5.3"/>
<circle cx="886.1" cy="455" r="5.6"/><circle cx="1278.1" cy="455" r="5.6"/><circle cx="886.1" cy="559.3" r="5.6"/><circle cx="1278.1" cy="559.3" r="5.6"/>
</g>
<g fill="#fff" stroke="#41719c" stroke-width="1.4">
<rect x="1078.5" y="450.7" width="8.8" height="8.8"/><rect x="1078.5" y="555" width="8.8" height="8.8"/><rect x="881.7" y="502.5" width="8.8" height="8.8"/><rect x="1273.7" y="502.5" width="8.8" height="8.8"/>
</g>
</svg>

<span class="t" style="left:371.4px;top:15.8px;font:400 16.5px/16.5px 'Liberation Sans',sans-serif;color:#fff;letter-spacing:0.141px;">Publication2 - Publisher</span>
<span class="t" style="left:29.2px;top:55.1px;font:400 16.5px/16.5px 'Liberation Sans',sans-serif;color:#fff;letter-spacing:-0.831px;">File</span>
<span class="t" style="left:106.7px;top:55.1px;font:400 16.5px/16.5px 'Liberation Sans',sans-serif;color:#fff;letter-spacing:0.761px;">Home</span>
<span class="t" style="left:194.2px;top:55.1px;font:400 16.5px/16.5px 'Liberation Sans',sans-serif;color:#fff;letter-spacing:-0.156px;">Insert</span>
<span class="t" style="left:275.8px;top:55.1px;font:400 16.5px/16.5px 'Liberation Sans',sans-serif;color:#fff;letter-spacing:-0.388px;">Page Design</span>
<span class="t" style="left:408.5px;top:55.1px;font:400 16.5px/16.5px 'Liberation Sans',sans-serif;color:#fff;letter-spacing:0.338px;">Mailings</span>
<span class="t" style="left:512.7px;top:55.1px;font:400 16.5px/16.5px 'Liberation Sans',sans-serif;color:#fff;letter-spacing:-0.562px;">Review</span>
<span class="t" style="left:604.2px;top:55.1px;font:400 16.5px/16.5px 'Liberation Sans',sans-serif;color:#fff;letter-spacing:0.110px;">View</span>
<span class="t" style="left:674.0px;top:16.8px;font:400 15.2px/15.2px 'Liberation Sans',sans-serif;color:#b4d4cd;letter-spacing:0.633px;">Drawing Tools</span>
<span class="t" style="left:801.5px;top:16.8px;font:400 15.2px/15.2px 'Liberation Sans',sans-serif;color:#b4d4cd;letter-spacing:0.120px;">Text Box Tools</span>
<span class="t" style="left:699.3px;top:55.1px;font:400 16.5px/16.5px 'Liberation Sans',sans-serif;color:#0b6a5e;letter-spacing:0.087px;">Format</span>
<span class="t" style="left:824.5px;top:55.1px;font:400 16.5px/16.5px 'Liberation Sans',sans-serif;color:#fff;letter-spacing:0.007px;">Format</span>
<span class="t" style="left:1855.0px;top:55.2px;font:400 16.5px/16.5px 'Liberation Sans',sans-serif;color:#fff;letter-spacing:0.091px;">Sign in</span>
<span class="t" style="left:235.5px;top:92.6px;font:400 16.5px/16.5px 'Liberation Sans',sans-serif;color:#363636;letter-spacing:-0.470px;">Edit Shape</span>
<span class="t" style="left:235.5px;top:124.9px;font:400 16.5px/16.5px 'Liberation Sans',sans-serif;color:#363636;letter-spacing:-0.283px;">Change Shape</span>
<span class="t" style="left:235.5px;top:158.0px;font:400 16.5px/16.5px 'Liberation Sans',sans-serif;color:#363636;letter-spacing:-0.223px;">Edit Text</span>
<span class="t" style="left:829.5px;top:92.6px;font:400 16.5px/16.5px 'Liberation Sans',sans-serif;color:#363636;letter-spacing:-0.431px;">Shape Fill</span>
<span class="t" style="left:829.5px;top:124.9px;font:400 16.5px/16.5px 'Liberation Sans',sans-serif;color:#363636;letter-spacing:-0.107px;">Shape Outline</span>
<span class="t" style="left:829.5px;top:158.0px;font:400 16.5px/16.5px 'Liberation Sans',sans-serif;color:#363636;letter-spacing:-0.361px;">Shape Effects</span>
<span class="t" style="left:974.0px;top:140.5px;font:400 16.5px/16.5px 'Liberation Sans',sans-serif;color:#363636;letter-spacing:-0.208px;">Wrap</span>
<span class="t" style="left:974.0px;top:163.2px;font:400 16.5px/16.5px 'Liberation Sans',sans-serif;color:#363636;letter-spacing:-0.755px;">Text</span>
<span class="t" style="left:1043.6px;top:140.5px;font:400 16.5px/16.5px 'Liberation Sans',sans-serif;color:#363636;letter-spacing:-0.158px;">Bring</span>
<span class="t" style="left:1026.6px;top:163.2px;font:400 16.5px/16.5px 'Liberation Sans',sans-serif;color:#363636;letter-spacing:-0.353px;">Forward</span>
<span class="t" style="left:1129.0px;top:140.5px;font:400 16.5px/16.5px 'Liberation Sans',sans-serif;color:#363636;letter-spacing:-0.916px;">Send</span>
<span class="t" style="left:1105.0px;top:163.2px;font:400 16.5px/16.5px 'Liberation Sans',sans-serif;color:#363636;letter-spacing:-0.208px;">Backward</span>
<span class="t" style="left:1202.0px;top:140.5px;font:400 16.5px/16.5px 'Liberation Sans',sans-serif;color:#363636;letter-spacing:0.449px;">Align</span>
<span class="t" style="left:1257.5px;top:140.5px;font:400 16.5px/16.5px 'Liberation Sans',sans-serif;color:#a6a6a6;letter-spacing:-0.140px;">Group</span>
<span class="t" style="left:1313.7px;top:140.5px;font:400 16.5px/16.5px 'Liberation Sans',sans-serif;color:#a6a6a6;letter-spacing:0.167px;">Ungroup</span>
<span class="t" style="left:1389.8px;top:140.5px;font:400 16.5px/16.5px 'Liberation Sans',sans-serif;color:#363636;letter-spacing:-0.445px;">Rotate</span>
<span class="t" style="left:1486.4px;top:92.6px;font:400 16.5px/16.5px 'Liberation Sans',sans-serif;color:#363636;letter-spacing:0.103px;">Height:</span>
<span class="t" style="left:1486.4px;top:124.9px;font:400 16.5px/16.5px 'Liberation Sans',sans-serif;color:#363636;letter-spacing:0.067px;">Width:</span>
<span class="t" style="left:1486.4px;top:158.0px;font:400 16.5px/16.5px 'Liberation Sans',sans-serif;color:#363636;letter-spacing:0.041px;">Measurement</span>
<span class="t" style="left:1552.7px;top:92.6px;font:400 16.5px/16.5px 'Liberation Sans',sans-serif;color:#444;letter-spacing:-0.921px;">1.39"</span>
<span class="t" style="left:1552.7px;top:124.9px;font:400 16.5px/16.5px 'Liberation Sans',sans-serif;color:#444;letter-spacing:-0.921px;">6.17"</span>
<span class="t" style="left:135.7px;top:191.9px;font:400 14.5px/14.5px 'Liberation Sans',sans-serif;color:#5a5a5a;letter-spacing:0.510px;">Insert Shapes</span>
<span class="t" style="left:607.5px;top:191.9px;font:400 14.5px/14.5px 'Liberation Sans',sans-serif;color:#5a5a5a;letter-spacing:0.341px;">Shape Styles</span>
<span class="t" style="left:1174.6px;top:191.9px;font:400 14.5px/14.5px 'Liberation Sans',sans-serif;color:#5a5a5a;letter-spacing:0.684px;">Arrange</span>
<span class="t" style="left:1525.6px;top:191.9px;font:400 14.5px/14.5px 'Liberation Sans',sans-serif;color:#5a5a5a;letter-spacing:-0.473px;">Size</span>
<span class="t" style="left:9.5px;top:228.9px;font:400 27.5px/27.5px 'Liberation Sans',sans-serif;color:#0b7a6c;letter-spacing:-0.221px;">Pages</span>
<span class="t" style="left:94.3px;top:484.1px;font:700 13.5px/13.5px 'Liberation Sans',sans-serif;color:#333;letter-spacing:0.000px;">1</span>
<span class="t" style="left:896.9px;top:473.7px;font:400 64px/64px 'Liberation Serif',serif;color:#5b9bd5;letter-spacing:0.632px;">Diversity Day</span>
<span class="t" style="left:992.2px;top:563.2px;font:400 9.6px/9.6px 'Liberation Sans',sans-serif;color:#7d7d7d;letter-spacing:0.202px;">Each Social Studies class has created an original interactive</span>
<span class="t" style="left:992.2px;top:575.9px;font:400 9.6px/9.6px 'Liberation Sans',sans-serif;color:#7d7d7d;letter-spacing:0.212px;">display demonstrating diversity. We’ll be awarding prizes to</span>
<span class="t" style="left:992.2px;top:588.5px;font:400 9.6px/9.6px 'Liberation Sans',sans-serif;color:#7d7d7d;letter-spacing:0.287px;">the students based on creativity, originality, and fun. Your</span>
<span class="t" style="left:992.2px;top:601.2px;font:400 9.6px/9.6px 'Liberation Sans',sans-serif;color:#7d7d7d;letter-spacing:0.287px;">entire family is welcome to attend. There will be a donation</span>
<span class="t" style="left:992.2px;top:613.5px;font:400 9.6px/9.6px 'Liberation Sans',sans-serif;color:#7d7d7d;letter-spacing:0.312px;">stand with snacks and beverages.</span>
<span class="t" style="left:992.2px;top:641.1px;font:400 12px/12px 'Liberation Sans',sans-serif;color:#4a90d6;letter-spacing:1.001px;">September 1st, 2013, 6 to 8 p.m.</span>
<span class="t" style="left:992.2px;top:667.9px;font:700 11px/11px 'Liberation Sans',sans-serif;color:#303030;letter-spacing:0.349px;">Varsity High School Gymnasium</span>
<span class="t" style="left:992.2px;top:683.3px;font:700 11px/11px 'Liberation Sans',sans-serif;color:#303030;letter-spacing:0.487px;">234 Academy St, Tampa FL 98105</span>
<span class="t" style="left:992.2px;top:702.0px;font:400 9px/9px 'Liberation Sans',sans-serif;color:#7a7a7a;letter-spacing:0.959px;">RSVP to ourschool@example.com</span>
<span class="t" style="left:992.2px;top:718.7px;font:400 7.5px/7.5px 'Liberation Sans',sans-serif;color:#7a7a7a;letter-spacing:0.796px;">[School website address]</span>
<span class="t" style="left:1745.0px;top:942.7px;font:700 17.5px/17.5px 'Liberation Sans',sans-serif;color:#0a0a0a;letter-spacing:0.641px;">TEMPLATE</span>
<span class="t" style="left:1843.5px;top:942.7px;font:400 17.5px/17.5px 'Liberation Sans',sans-serif;color:#1a1a1a;letter-spacing:-0.192px;">.NET</span>
</div>
<svg width="1920" height="995" viewBox="0 0 1920 995">
<rect x="647" y="14" width="274" height="83" fill="none" stroke="#2b82e9" stroke-width="10"/>
<path d="M770.9 107.8 L805.8 133.5 L780.9 140.3 C782.4 146.9 786.9 167.6 790.1 180 C793.3 192.4 796.6 203.3 800.2 215 C803.8 226.7 808.5 240 811.9 250 C815.3 260 816.8 264.2 820.7 275 C824.6 285.8 833 308.2 835.4 314.8 L804.3 323.6 C802.9 311.3 798.4 268.1 796.1 250 C793.9 231.9 792.5 226.7 790.8 215 C789.1 203.3 787.8 192.2 785.8 180 C783.8 167.8 780.1 147.9 779 141.5 L753.5 148 Z" fill="#2b82e9" stroke="#2b82e9" stroke-width="5" stroke-linejoin="round"/>
<defs><linearGradient id="lg" x1="0" y1="1" x2="1" y2="0"><stop offset="0" stop-color="#1670ea"/><stop offset="1" stop-color="#21a6f7"/></linearGradient></defs>
<rect x="1716" y="938.8" width="23" height="23" rx="5.5" fill="url(#lg)"/>
<path d="M1721.9 944 H1733.1 V948.1 H1730.3 V957.5 H1724.7 V948.1 H1721.9 Z" fill="#fff"/>
</svg>

</body></html>
